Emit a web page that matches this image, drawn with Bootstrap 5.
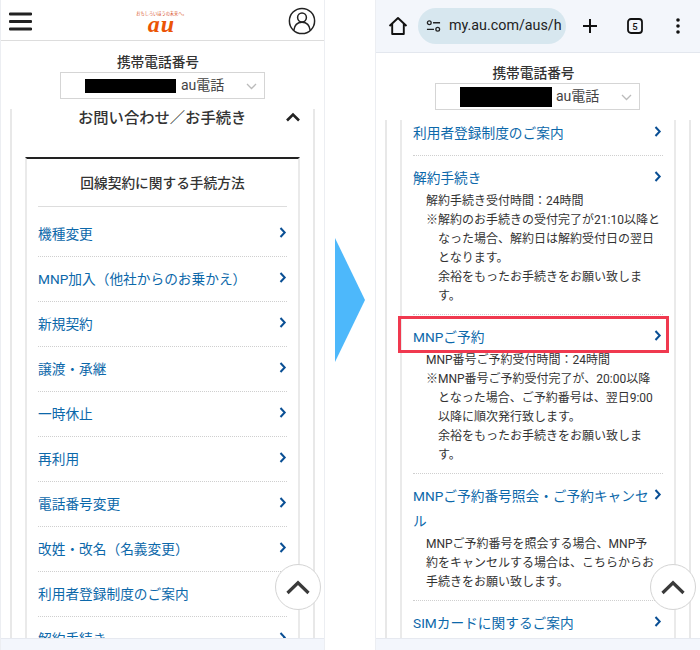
<!DOCTYPE html>
<html lang="ja">
<head>
<meta charset="utf-8">
<title>MNPご予約</title>
<link href="https://cdn.jsdelivr.net/npm/bootstrap@5.3.0/dist/css/bootstrap.min.css" rel="stylesheet">
<style>
html,body{margin:0;height:650px;overflow:hidden;background:#fff}
body{font-family:"Roboto","Noto Sans CJK JP",sans-serif;color:#333}
.stage{width:700px;height:650px}
.phone{height:650px;overflow:hidden;border-left:1px solid #eceef2}
.phone-a{width:325px;border-right:1px solid #eceef2}
.phone-b{width:325px}
.gutter{width:50px}
.arrow-svg{margin-bottom:50px}
.topbar-a{height:41px;border-bottom:1.5px solid #ddd;padding:2px 8px 0}
.topbar-b{height:53px;background:#f3f6fb;border-bottom:1px solid #e3e7ee;padding:0 19px 0 12px}
.logo-wrap{line-height:1;margin-left:3px;margin-top:1px}
.logo-tag{font-size:4.2px;color:#d8502a;line-height:5px;white-space:nowrap}
.logo-au{font-family:"Liberation Serif",serif;font-style:italic;font-weight:700;font-size:24px;line-height:17px;height:17px;color:#eb5505;letter-spacing:1px}
.pill{width:148px;height:36px;background:#d7e7ef;border-radius:18px;padding-left:8px;margin-left:10px;margin-right:16px;overflow:hidden;font-size:14.3px;color:#222;white-space:nowrap}
.tab-count{margin-left:29px}
.tel-a{height:68px}
.tel-b{height:67px}
.tel-label{font-size:13.7px;font-weight:500;line-height:16px;color:#333;margin-right:9px}
.tel-select{width:205px;height:27px;border:1px solid #d5d5d5;font-size:14px;color:#444;margin-top:2px;padding-left:24px}
.tel-b .tel-select{margin-right:1px}
.tel-b .tel-label{margin-top:12px}
.tel-a .tel-label{margin-top:13px}
.ink-a{width:91px;height:14px;background:#000;margin-right:5px}
.ink-b{width:92px;height:20px;background:#000;margin-right:4px}
.caret{position:absolute;right:7px;top:10px}
.scroller{border-left:2px solid #e8e8e8;border-right:2px solid #e8e8e8;margin:0 9px;min-height:0;overflow:hidden}
.acc-head{height:48px;font-size:15.3px;font-weight:500;line-height:18px;color:#333}
.acc-title{margin-left:66px}
.acc-chev{margin-left:39px;margin-top:-1px}
.subcard{margin:0 13px;border-left:2px solid #eaeaea;border-right:2px solid #eaeaea;padding:0 11px}
.phone-a .subcard{border-top:2px solid #222}
.sub-title{height:48px;font-size:13.7px;font-weight:500;border-bottom:1px solid #ddd;padding-top:1px}
.first-pad{height:5px}
.proc-row{border-bottom:1px dotted #cfcfcf}
.proc-row.clean{border-bottom:0}
.proc-link{display:flex;justify-content:space-between;align-items:flex-start;color:#0c68aa;text-decoration:none;font-size:13.7px;line-height:25px;padding:10px 0 9px}
.proc-link.has-text{padding-bottom:0}
.proc-chev{flex:none;margin-top:5px}
.phone-b .proc-chev{margin-right:1px}
.proc-note{font-size:12px;line-height:19px;color:#333;padding:1px 0 8px 13px;white-space:nowrap}
.hang{padding-left:12px}
.lead-in{margin-top:-9px}
.footbar{height:12px;background:#f3f6fc;border-top:1px solid #e6e9f0}
.to-top{position:absolute;top:564px;width:46px;height:46px;border-radius:50%;background:#fff;border:1px solid #d4d4d4}
.phone-a .to-top{left:274px}
.phone-b .to-top{left:274px}
.callout{position:absolute;left:22px;top:316px;width:271px;height:37px;border:3px solid #f0394f}
</style>
</head>
<body>
<div class="stage d-flex">

<section class="phone phone-a position-relative d-flex flex-column">
  <header class="topbar-a d-flex align-items-center justify-content-between flex-shrink-0">
    <svg width="23" height="23" viewBox="0 0 23 23"><path d="M1 4h21M1 11.500h21M1 19h21" stroke="#222" stroke-width="2.800" stroke-linecap="round"/></svg>
    <div class="logo-wrap text-center">
      <div class="logo-tag">おもしろいほうの未来へ。</div>
      <div class="logo-au">au</div>
    </div>
    <svg width="28" height="28" viewBox="0 0 28 28" fill="none" stroke="#222" stroke-width="1.500"><circle cx="14" cy="14" r="12.600"/><circle cx="14" cy="10.500" r="4.400"/><path d="M5.800 23.400c.6-5.200 3.600-8.200 8.200-8.200s7.600 3 8.200 8.200"/></svg>
  </header>
  <div class="tel-a d-flex flex-column align-items-center flex-shrink-0">
    <div class="tel-label">携帯電話番号</div>
    <div class="tel-select d-flex align-items-center position-relative">
      <span class="ink-a"></span><span>au電話</span>
      <svg class="caret" width="11" height="7" viewBox="0 0 11 7"><path d="M1 1l4.500 4.500L10 1" fill="none" stroke="#bbb" stroke-width="1.300"/></svg>
    </div>
  </div>
  <div class="scroller flex-grow-1">
    <div class="acc-head d-flex align-items-start">
      <span class="acc-title">お問い合わせ／お手続き</span>
      <svg class="acc-chev" width="16" height="18" viewBox="0 0 16 18"><path d="M2 12.500l6-6 6 6" fill="none" stroke="#222" stroke-width="2.600"/></svg>
    </div>
    <div class="subcard">
      <div class="sub-title d-flex align-items-center justify-content-center">回線契約に関する手続方法</div>
      <div class="first-pad"></div>
      <div class="proc-row"><a class="proc-link" href="#">機種変更<svg class="proc-chev" width="8" height="11" viewBox="0 0 8 11"><path d="M1.500 1l4.200 4.500L1.500 10" fill="none" stroke="#0a4f94" stroke-width="2"/></svg></a></div>
      <div class="proc-row"><a class="proc-link" href="#">MNP加入（他社からのお乗かえ）<svg class="proc-chev" width="8" height="11" viewBox="0 0 8 11"><path d="M1.500 1l4.200 4.500L1.500 10" fill="none" stroke="#0a4f94" stroke-width="2"/></svg></a></div>
      <div class="proc-row"><a class="proc-link" href="#">新規契約<svg class="proc-chev" width="8" height="11" viewBox="0 0 8 11"><path d="M1.500 1l4.200 4.500L1.500 10" fill="none" stroke="#0a4f94" stroke-width="2"/></svg></a></div>
      <div class="proc-row"><a class="proc-link" href="#">譲渡・承継<svg class="proc-chev" width="8" height="11" viewBox="0 0 8 11"><path d="M1.500 1l4.200 4.500L1.500 10" fill="none" stroke="#0a4f94" stroke-width="2"/></svg></a></div>
      <div class="proc-row"><a class="proc-link" href="#">一時休止<svg class="proc-chev" width="8" height="11" viewBox="0 0 8 11"><path d="M1.500 1l4.200 4.500L1.500 10" fill="none" stroke="#0a4f94" stroke-width="2"/></svg></a></div>
      <div class="proc-row"><a class="proc-link" href="#">再利用<svg class="proc-chev" width="8" height="11" viewBox="0 0 8 11"><path d="M1.500 1l4.200 4.500L1.500 10" fill="none" stroke="#0a4f94" stroke-width="2"/></svg></a></div>
      <div class="proc-row"><a class="proc-link" href="#">電話番号変更<svg class="proc-chev" width="8" height="11" viewBox="0 0 8 11"><path d="M1.500 1l4.200 4.500L1.500 10" fill="none" stroke="#0a4f94" stroke-width="2"/></svg></a></div>
      <div class="proc-row"><a class="proc-link" href="#">改姓・改名（名義変更）<svg class="proc-chev" width="8" height="11" viewBox="0 0 8 11"><path d="M1.500 1l4.200 4.500L1.500 10" fill="none" stroke="#0a4f94" stroke-width="2"/></svg></a></div>
      <div class="proc-row"><a class="proc-link" href="#">利用者登録制度のご案内<svg class="proc-chev" width="8" height="11" viewBox="0 0 8 11"><path d="M1.500 1l4.200 4.500L1.500 10" fill="none" stroke="#0a4f94" stroke-width="2"/></svg></a></div>
      <div class="proc-row clean"><a class="proc-link" href="#">解約手続き<svg class="proc-chev" width="8" height="11" viewBox="0 0 8 11"><path d="M1.500 1l4.200 4.500L1.500 10" fill="none" stroke="#0a4f94" stroke-width="2"/></svg></a></div>
    </div>
  </div>
  <div class="footbar flex-shrink-0"></div>
  <button class="to-top d-flex align-items-center justify-content-center p-0" type="button" aria-label="ページ上部へ"><svg width="24" height="15" viewBox="0 0 24 15"><path d="M1.500 13L12 2.800 22.500 13" fill="none" stroke="#3a3a3a" stroke-width="3.200"/></svg></button>
</section>

<div class="gutter d-flex align-items-center justify-content-center">
  <svg class="arrow-svg" width="30" height="124" viewBox="0 0 30 124"><polygon points="0,0 30,62 0,124" fill="#4db8fb"/></svg>
</div>

<section class="phone phone-b position-relative d-flex flex-column">
  <header class="topbar-b d-flex align-items-center flex-shrink-0">
    <svg width="20" height="20" viewBox="0 0 20 20" fill="none" stroke="#111" stroke-width="1.900" stroke-linejoin="round"><path d="M1.500 10L10 2l8.500 8M4.200 8v10h11.600V8"/></svg>
    <div class="pill d-flex align-items-center">
      <svg class="flex-shrink-0" width="15" height="14" viewBox="0 0 16 14" fill="none" stroke="#222" stroke-width="1.400"><circle cx="3.500" cy="3.500" r="2"/><path d="M7.500 3.500h7.500M1 10.500h7.500"/><circle cx="12.500" cy="10.500" r="2"/></svg>
      <span class="ms-2">my.au.com/aus/h</span>
    </div>
    <svg width="16" height="16" viewBox="0 0 16 16"><path d="M8 1v14M1 8h14" stroke="#111" stroke-width="2"/></svg>
    <div class="tab-count d-flex"><svg width="16" height="16" viewBox="0 0 16 16"><rect x="1" y="1" width="14" height="14" rx="3" fill="none" stroke="#111" stroke-width="1.800"/><text x="8" y="11.500" text-anchor="middle" font-family="Roboto,sans-serif" font-size="9.500" font-weight="500" fill="#111">5</text></svg></div>
    <svg class="ms-auto" width="6" height="16" viewBox="0 0 6 16"><circle cx="3" cy="2" r="1.800" fill="#111"/><circle cx="3" cy="8" r="1.800" fill="#111"/><circle cx="3" cy="14" r="1.800" fill="#111"/></svg>
  </header>
  <div class="tel-b d-flex flex-column align-items-center flex-shrink-0">
    <div class="tel-label">携帯電話番号</div>
    <div class="tel-select d-flex align-items-center position-relative">
      <span class="ink-b"></span><span>au電話</span>
      <svg class="caret" width="11" height="7" viewBox="0 0 11 7"><path d="M1 1l4.500 4.500L10 1" fill="none" stroke="#bbb" stroke-width="1.300"/></svg>
    </div>
  </div>
  <div class="scroller flex-grow-1">
    <div class="subcard">
      <div class="proc-row lead-in"><a class="proc-link" href="#">利用者登録制度のご案内<svg class="proc-chev" width="8" height="11" viewBox="0 0 8 11"><path d="M1.500 1l4.200 4.500L1.500 10" fill="none" stroke="#0a4f94" stroke-width="2"/></svg></a></div>
      <div class="proc-row">
        <a class="proc-link has-text" href="#">解約手続き<svg class="proc-chev" width="8" height="11" viewBox="0 0 8 11"><path d="M1.500 1l4.200 4.500L1.500 10" fill="none" stroke="#0a4f94" stroke-width="2"/></svg></a>
        <div class="proc-note">
          <div>解約手続き受付時間：24時間</div>
          <div>※解約のお手続きの受付完了が21:10以降と</div>
          <div class="hang">なった場合、解約日は解約受付日の翌日</div>
          <div class="hang">となります。</div>
          <div class="hang">余裕をもったお手続きをお願い致しま</div>
          <div class="hang">す。</div>
        </div>
      </div>
      <div class="proc-row">
        <a class="proc-link has-text" href="#">MNPご予約<svg class="proc-chev" width="8" height="11" viewBox="0 0 8 11"><path d="M1.500 1l4.200 4.500L1.500 10" fill="none" stroke="#0a4f94" stroke-width="2"/></svg></a>
        <div class="proc-note">
          <div>MNP番号ご予約受付時間：24時間</div>
          <div>※MNP番号ご予約受付完了が、20:00以降</div>
          <div class="hang">となった場合、ご予約番号は、翌日9:00</div>
          <div class="hang">以降に順次発行致します。</div>
          <div class="hang">余裕をもったお手続きをお願い致しま</div>
          <div class="hang">す。</div>
        </div>
      </div>
      <div class="proc-row">
        <a class="proc-link has-text" href="#"><span>MNPご予約番号照会・ご予約キャンセ<br>ル</span><svg class="proc-chev" width="8" height="11" viewBox="0 0 8 11"><path d="M1.500 1l4.200 4.500L1.500 10" fill="none" stroke="#0a4f94" stroke-width="2"/></svg></a>
        <div class="proc-note">
          <div>MNPご予約番号を照会する場合、MNP予</div>
          <div>約をキャンセルする場合は、こちらからお</div>
          <div>手続きをお願い致します。</div>
        </div>
      </div>
      <div class="proc-row clean"><a class="proc-link" href="#">SIMカードに関するご案内<svg class="proc-chev" width="8" height="11" viewBox="0 0 8 11"><path d="M1.500 1l4.200 4.500L1.500 10" fill="none" stroke="#0a4f94" stroke-width="2"/></svg></a></div>
    </div>
  </div>
  <div class="footbar flex-shrink-0"></div>
  <div class="callout"></div>
  <button class="to-top d-flex align-items-center justify-content-center p-0" type="button" aria-label="ページ上部へ"><svg width="24" height="15" viewBox="0 0 24 15"><path d="M1.500 13L12 2.800 22.500 13" fill="none" stroke="#3a3a3a" stroke-width="3.200"/></svg></button>
</section>

</div>
<script src="https://cdn.jsdelivr.net/npm/bootstrap@5.3.0/dist/js/bootstrap.bundle.min.js"></script>
</body>
</html>
